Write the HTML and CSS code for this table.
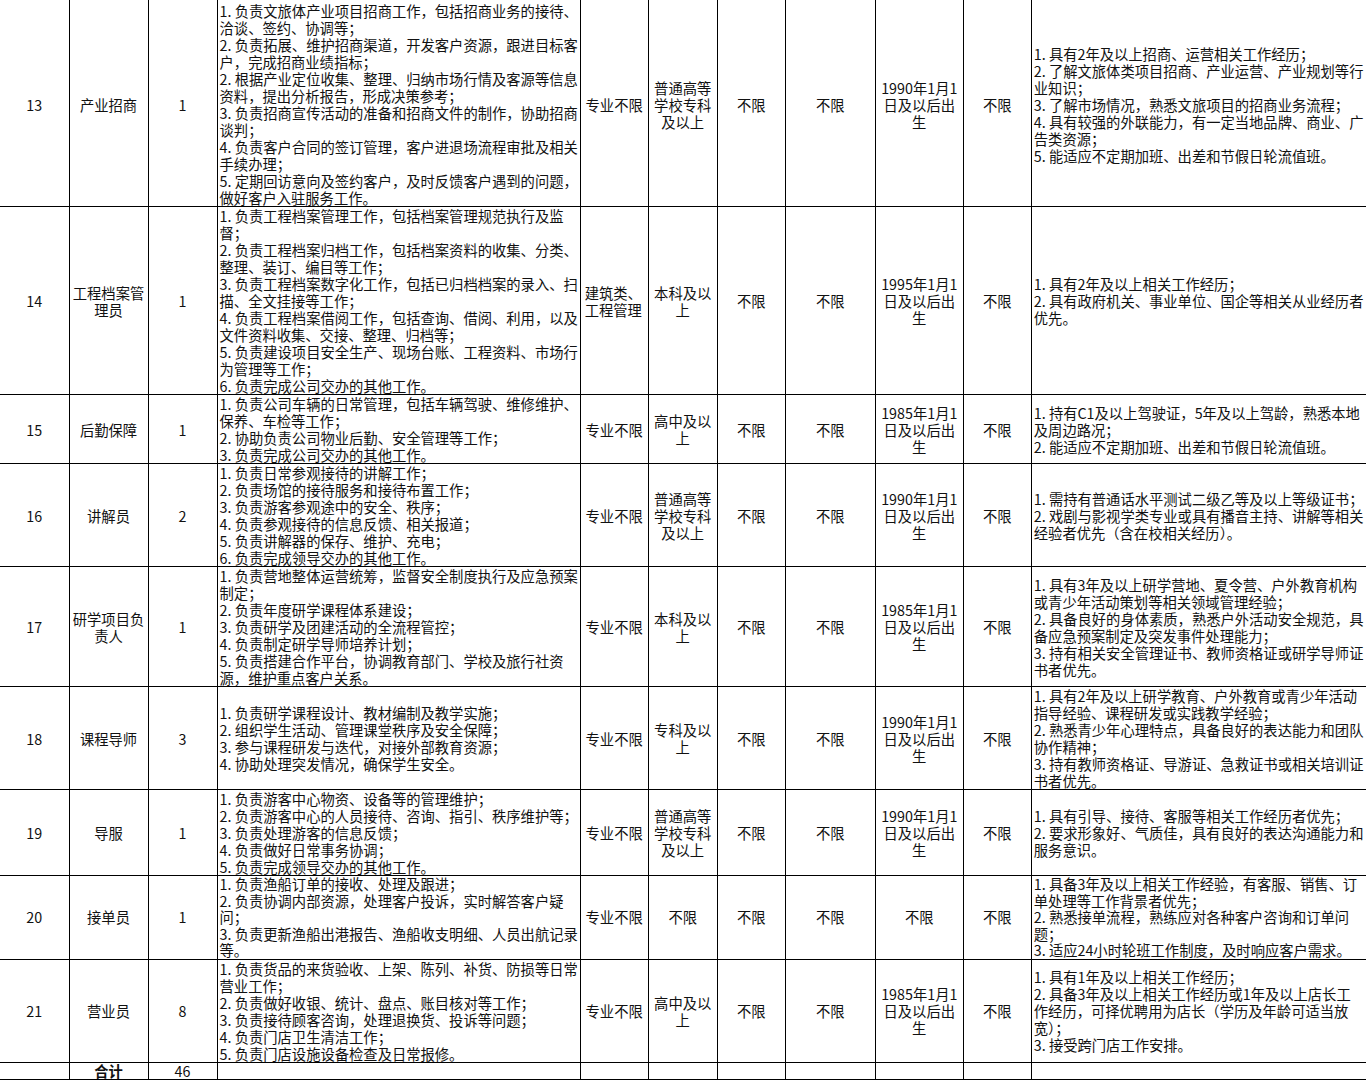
FILE: index.html
```html
<!DOCTYPE html>
<html lang="zh-CN">
<head>
<meta charset="utf-8">
<title>招聘岗位表</title>
<link rel="stylesheet" href="styles.css">
</head>
<body>
<table class="sheet">
<colgroup>
<col class="c-no"><col class="c-pos"><col class="c-num"><col class="c-duty"><col class="c-major"><col class="c-edu"><col class="c-a"><col class="c-b"><col class="c-age"><col class="c-c"><col class="c-req">
</colgroup>
<tbody>
<tr class="first">
<td>13</td><td>产业招商</td><td>1</td>
<td class="txt">1. 负责文旅体产业项目招商工作，包括招商业务的接待、<br>洽谈、签约、协调等；<br>2. 负责拓展、维护招商渠道，开发客户资源，跟进目标客<br>户，完成招商业绩指标；<br>2. 根据产业定位收集、整理、归纳市场行情及客源等信息<br>资料，提出分析报告，形成决策参考；<br>3. 负责招商宣传活动的准备和招商文件的制作，协助招商<br>谈判；<br>4. 负责客户合同的签订管理，客户进退场流程审批及相关<br>手续办理；<br>5. 定期回访意向及签约客户，及时反馈客户遇到的问题，<br>做好客户入驻服务工作。</td>
<td>专业不限</td><td>普通高等<br>学校专科<br>及以上</td><td>不限</td><td>不限</td><td>1990年1月1<br>日及以后出<br>生</td><td>不限</td>
<td class="txt">1. 具有2年及以上招商、运营相关工作经历；<br>2. 了解文旅体类项目招商、产业运营、产业规划等行<br>业知识；<br>3. 了解市场情况，熟悉文旅项目的招商业务流程；<br>4. 具有较强的外联能力，有一定当地品牌、商业、广<br>告类资源；<br>5. 能适应不定期加班、出差和节假日轮流值班。</td>
</tr>
<tr class="gray">
<td>14</td><td>工程档案管<br>理员</td><td>1</td>
<td class="txt">1. 负责工程档案管理工作，包括档案管理规范执行及监<br>督；<br>2. 负责工程档案归档工作，包括档案资料的收集、分类、<br>整理、装订、编目等工作；<br>3. 负责工程档案数字化工作，包括已归档档案的录入、扫<br>描、全文挂接等工作；<br>4. 负责工程档案借阅工作，包括查询、借阅、利用，以及<br>文件资料收集、交接、整理、归档等；<br>5. 负责建设项目安全生产、现场台账、工程资料、市场行<br>为管理等工作；<br>6. 负责完成公司交办的其他工作。</td>
<td class="left">建筑类、<br>工程管理</td><td>本科及以<br>上</td><td>不限</td><td>不限</td><td>1995年1月1<br>日及以后出<br>生</td><td>不限</td>
<td class="txt">1. 具有2年及以上相关工作经历；<br>2. 具有政府机关、事业单位、国企等相关从业经历者<br>优先。</td>
</tr>
<tr>
<td>15</td><td>后勤保障</td><td>1</td>
<td class="txt">1. 负责公司车辆的日常管理，包括车辆驾驶、维修维护、<br>保养、车检等工作；<br>2. 协助负责公司物业后勤、安全管理等工作；<br>3. 负责完成公司交办的其他工作。</td>
<td>专业不限</td><td>高中及以<br>上</td><td>不限</td><td>不限</td><td>1985年1月1<br>日及以后出<br>生</td><td>不限</td>
<td class="txt">1. 持有C1及以上驾驶证，5年及以上驾龄，熟悉本地<br>及周边路况；<br>2. 能适应不定期加班、出差和节假日轮流值班。</td>
</tr>
<tr>
<td>16</td><td>讲解员</td><td>2</td>
<td class="txt">1. 负责日常参观接待的讲解工作；<br>2. 负责场馆的接待服务和接待布置工作；<br>3. 负责游客参观途中的安全、秩序；<br>4. 负责参观接待的信息反馈、相关报道；<br>5. 负责讲解器的保存、维护、充电；<br>6. 负责完成领导交办的其他工作。</td>
<td>专业不限</td><td>普通高等<br>学校专科<br>及以上</td><td>不限</td><td>不限</td><td>1990年1月1<br>日及以后出<br>生</td><td>不限</td>
<td class="txt">1. 需持有普通话水平测试二级乙等及以上等级证书；<br>2. 戏剧与影视学类专业或具有播音主持、讲解等相关<br>经验者优先（含在校相关经历）。</td>
</tr>
<tr>
<td>17</td><td>研学项目负<br>责人</td><td>1</td>
<td class="txt">1. 负责营地整体运营统筹，监督安全制度执行及应急预案<br>制定；<br>2. 负责年度研学课程体系建设；<br>3. 负责研学及团建活动的全流程管控；<br>4. 负责制定研学导师培养计划；<br>5. 负责搭建合作平台，协调教育部门、学校及旅行社资<br>源，维护重点客户关系。</td>
<td>专业不限</td><td>本科及以<br>上</td><td>不限</td><td>不限</td><td>1985年1月1<br>日及以后出<br>生</td><td>不限</td>
<td class="txt">1. 具有3年及以上研学营地、夏令营、户外教育机构<br>或青少年活动策划等相关领域管理经验；<br>2. 具备良好的身体素质，熟悉户外活动安全规范，具<br>备应急预案制定及突发事件处理能力；<br>3. 持有相关安全管理证书、教师资格证或研学导师证<br>书者优先。</td>
</tr>
<tr>
<td>18</td><td>课程导师</td><td>3</td>
<td class="txt">1. 负责研学课程设计、教材编制及教学实施；<br>2. 组织学生活动、管理课堂秩序及安全保障；<br>3. 参与课程研发与迭代，对接外部教育资源；<br>4. 协助处理突发情况，确保学生安全。</td>
<td>专业不限</td><td>专科及以<br>上</td><td>不限</td><td>不限</td><td>1990年1月1<br>日及以后出<br>生</td><td>不限</td>
<td class="txt">1. 具有2年及以上研学教育、户外教育或青少年活动<br>指导经验、课程研发或实践教学经验；<br>2. 熟悉青少年心理特点，具备良好的表达能力和团队<br>协作精神；<br>3. 持有教师资格证、导游证、急救证书或相关培训证<br>书者优先。</td>
</tr>
<tr>
<td>19</td><td>导服</td><td>1</td>
<td class="txt">1. 负责游客中心物资、设备等的管理维护；<br>2. 负责游客中心的人员接待、咨询、指引、秩序维护等；<br>3. 负责处理游客的信息反馈；<br>4. 负责做好日常事务协调；<br>5. 负责完成领导交办的其他工作。</td>
<td>专业不限</td><td>普通高等<br>学校专科<br>及以上</td><td>不限</td><td>不限</td><td>1990年1月1<br>日及以后出<br>生</td><td>不限</td>
<td class="txt">1. 具有引导、接待、客服等相关工作经历者优先；<br>2. 要求形象好、气质佳，具有良好的表达沟通能力和<br>服务意识。</td>
</tr>
<tr class="gray tight">
<td>20</td><td>接单员</td><td>1</td>
<td class="txt">1. 负责渔船订单的接收、处理及跟进；<br>2. 负责协调内部资源，处理客户投诉，实时解答客户疑<br>问；<br>3. 负责更新渔船出港报告、渔船收支明细、人员出航记录<br>等。</td>
<td>专业不限</td><td>不限</td><td>不限</td><td>不限</td><td>不限</td><td>不限</td>
<td class="txt">1. 具备3年及以上相关工作经验，有客服、销售、订<br>单处理等工作背景者优先；<br>2. 熟悉接单流程，熟练应对各种客户咨询和订单问<br>题；<br>3. 适应24小时轮班工作制度，及时响应客户需求。</td>
</tr>
<tr>
<td>21</td><td>营业员</td><td>8</td>
<td class="txt">1. 负责货品的来货验收、上架、陈列、补货、防损等日常<br>营业工作；<br>2. 负责做好收银、统计、盘点、账目核对等工作；<br>3. 负责接待顾客咨询，处理退换货、投诉等问题；<br>4. 负责门店卫生清洁工作；<br>5. 负责门店设施设备检查及日常报修。</td>
<td>专业不限</td><td>高中及以<br>上</td><td>不限</td><td>不限</td><td>1985年1月1<br>日及以后出<br>生</td><td>不限</td>
<td class="txt">1. 具有1年及以上相关工作经历；<br>2. 具备3年及以上相关工作经历或1年及以上店长工<br>作经历，可择优聘用为店长（学历及年龄可适当放<br>宽）；<br>3. 接受跨门店工作安排。</td>
</tr>
<tr class="total">
<td></td><td class="bold">合计</td><td>46</td><td></td><td></td><td></td><td></td><td></td><td></td><td></td><td></td>
</tr>
</tbody>
</table>
</body>
</html>
```

FILE: styles.css
```css
html, body {
  margin: 0;
  padding: 0;
  background: #fff;
  overflow: hidden;
}

.sheet {
  border-collapse: collapse;
  table-layout: fixed;
  width: 1371px;
  font-family: "Noto Sans CJK SC", "Noto Sans", sans-serif;
  font-size: 14.3px;
  line-height: 17px;
  color: #111;
}

.c-no { width: 69px; }
.c-pos { width: 79px; }
.c-num { width: 69px; }
.c-duty { width: 363px; }
.c-major { width: 68px; }
.c-edu { width: 69px; }
.c-a { width: 68px; }
.c-b { width: 90px; }
.c-age { width: 88px; }
.c-c { width: 68px; }
.c-req { width: 339px; }

.sheet td {
  border: 1px solid #000;
  padding: 0;
  text-align: center;
  vertical-align: middle;
  white-space: nowrap;
  overflow: hidden;
}

.sheet tr.first td {
  border-top: none;
  padding-top: 2px;
}
.sheet td:first-child { border-left: none; }

.sheet tr.gray td { border-top: 1px solid #7a7a7a; }

.sheet tr.tight td { line-height: 16.6px; }

.sheet td.txt {
  text-align: left;
  padding-left: 2px;
}

.sheet td.left {
  text-align: left;
  padding-left: 4px;
}

.sheet tr.total td {
  height: 16px;
  line-height: 16px;
  vertical-align: bottom;
}

.sheet td.bold { font-weight: bold; }
```
